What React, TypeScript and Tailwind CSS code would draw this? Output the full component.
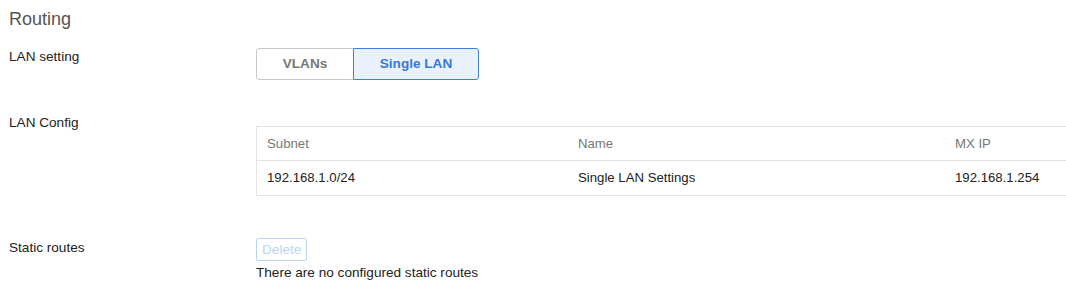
export default function App() {
  const font = { fontFamily: '"Liberation Sans", Arial, sans-serif' };
  return (
    <div className="w-[1066px] h-[298px] bg-white overflow-hidden text-[13.6px] text-[#222]" style={font}>
      <div className="pl-[9px] pt-[8px] text-[18px] leading-[22px] text-[#555]">Routing</div>
      <div className="flex mt-[18px]">
        <div className="w-[256px] pl-[9px] pt-[1px] leading-[16px]">LAN setting</div>
        <div className="flex">
          <button className="w-[98px] h-[32px] border border-[#c8c8c8] rounded-l-[3px] text-[#777] font-bold text-[13.6px]">VLANs</button>
          <button className="w-[126px] h-[32px] border border-[#3b82e0] rounded-r-[3px] bg-[#e9f1fc] text-[#3a78d6] font-bold text-[13.6px] -ml-px">Single LAN</button>
        </div>
      </div>
      <div className="flex mt-[35px]">
        <div className="w-[256px] pl-[9px] leading-[16px]">LAN Config</div>
        <div className="flex-1 mt-[11px] border-t border-b border-l border-[#e3e3e3] text-[13.2px]">
          <div className="flex h-[34px] items-center border-b border-[#e3e3e3] text-[#777]">
            <div className="w-[321px] pl-[10px]">Subnet</div>
            <div className="w-[377px]">Name</div>
            <div className="flex-1">MX IP</div>
          </div>
          <div className="flex h-[34px] items-center">
            <div className="w-[321px] pl-[10px]">192.168.1.0/24</div>
            <div className="w-[377px]">Single LAN Settings</div>
            <div className="flex-1">192.168.1.254</div>
          </div>
        </div>
      </div>
      <div className="flex mt-[41px]">
        <div className="w-[256px] pl-[9px] pt-[3px] leading-[16px]">Static routes</div>
        <div className="pt-[1px]">
          <button className="h-[23px] px-[5px] border border-[#b9d5f7] rounded-[2px] text-[#b9d5f7] text-[13.6px] leading-[21px]">Delete</button>
          <div className="mt-[4px] leading-[16px]">There are no configured static routes</div>
        </div>
      </div>
    </div>
  );
}
